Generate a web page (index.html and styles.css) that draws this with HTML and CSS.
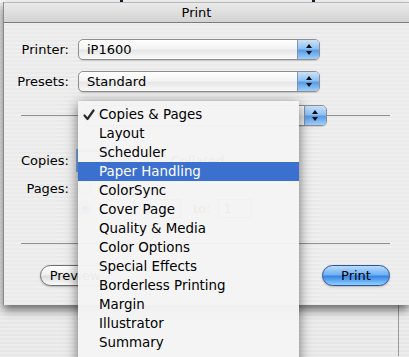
FILE: index.html
```html
<!DOCTYPE html>
<html>
<head>
<meta charset="utf-8">
<link rel="stylesheet" href="styles.css">
</head>
<body>
<div class="page">
  <div class="topstrip"><span class="mark m1"></span><span class="mark m2"></span></div>
  <div class="sheet">
    <div class="titlebar">Print</div>
    <div class="content">
      <div class="row r-printer">
        <div class="label">Printer:</div>
        <div class="popup"><span class="ptext">iP1600</span><span class="stepper"><i class="up"></i><i class="down"></i></span></div>
      </div>
      <div class="row r-presets">
        <div class="label">Presets:</div>
        <div class="popup"><span class="ptext">Standard</span><span class="stepper"><i class="up"></i><i class="down"></i></span></div>
      </div>
      <div class="seprow">
        <div class="line"></div>
        <div class="popup"><span class="ptext"></span><span class="stepper"><i class="up"></i><i class="down"></i></span></div>
        <div class="line"></div>
      </div>
      <div class="row r-copies">
        <div class="label">Copies:</div>
        <div class="field focus"></div>
        <div class="check-box"></div><span class="ctext">Collated</span>
      </div>
      <div class="row r-pages">
        <div class="label">Pages:</div>
        <div class="radio"></div>
      </div>
      <div class="row r-from">
        <div class="label"></div>
        <div class="radio on"></div>
        <div class="field wide"></div>
        <span class="ctext to">to:</span>
        <div class="field wide">1</div>
      </div>
      <div class="sep2"></div>
      <div class="buttons">
        <div class="btn preview">Preview</div>
        <div class="btn print">Print</div>
      </div>
    </div>
  </div>
  <div class="below"><div class="behind"></div></div>

  <div class="menu">
    <div class="item"><span class="chk"><svg width="12" height="12" viewBox="0 0 12 12"><path d="M1.5 6.5 L4.5 10 L10.5 1.5" fill="none" stroke="#2a2a2a" stroke-width="2.2" stroke-linecap="round" stroke-linejoin="round"/></svg></span>Copies &amp; Pages</div>
    <div class="item"><span class="chk"></span>Layout</div>
    <div class="item"><span class="chk"></span>Scheduler</div>
    <div class="item sel"><span class="chk"></span>Paper Handling</div>
    <div class="item"><span class="chk"></span>ColorSync</div>
    <div class="item"><span class="chk"></span>Cover Page</div>
    <div class="item"><span class="chk"></span>Quality &amp; Media</div>
    <div class="item"><span class="chk"></span>Color Options</div>
    <div class="item"><span class="chk"></span>Special Effects</div>
    <div class="item"><span class="chk"></span>Borderless Printing</div>
    <div class="item"><span class="chk"></span>Margin</div>
    <div class="item"><span class="chk"></span>Illustrator</div>
    <div class="item"><span class="chk"></span>Summary</div>
  </div>
</div>
</body>
</html>
```

FILE: styles.css
```css
html, body {
  margin: 0;
  padding: 0;
}
body {
  font-family: "DejaVu Sans", "Liberation Sans", sans-serif;
  font-size: 13px;
  color: #000;
}
.page {
  position: relative;
  width: 409px;
  height: 357px;
  overflow: hidden;
  background: repeating-linear-gradient(to bottom, #ededed 0 2px, #e7e7e7 2px 4px);
}
.topstrip {
  height: 3px;
  background: #f6f6f6;
  display: flex;
}
.mark {
  display: block;
  width: 3px;
  height: 2px;
  background: #1c1c3a;
}
.m1 { margin-left: 120px; }
.m2 { margin-left: 189px; }

.sheet {
  margin-left: 3px;
  height: 303px;
  border-left: 1px solid #8c8c8c;
  box-sizing: border-box;
  background: repeating-linear-gradient(to bottom, #efefef 0 2px, #eaeaea 2px 4px);
  box-shadow: 0 5px 9px rgba(0, 0, 0, 0.55);
  position: relative;
  z-index: 1;
}
.titlebar {
  height: 19px;
  line-height: 19px;
  border-bottom: 1px solid #7b7b7b;
  border-top: 1px solid #b9b9b9;
  margin-top: -1px;
  background: linear-gradient(to bottom, #eaeaea, #d3d3d3);
  text-align: center;
  font-size: 13px;
  padding-right: 20px;
}
.content {
  padding: 16px 19px 0 0;
}
.row {
  display: flex;
  align-items: center;
  height: 21px;
}
.label {
  width: 65px;
  text-align: right;
  margin-right: 9px;
  flex: none;
}
.r-presets { margin-top: 11px; }

.popup {
  position: relative;
  width: 242px;
  height: 21px;
  box-sizing: border-box;
  border: 1px solid #8e8e8e;
  border-radius: 5px;
  background: linear-gradient(to bottom, #ffffff 0%, #f4f4f4 45%, #e6e6e6 55%, #fbfbfb 100%);
  display: flex;
  align-items: center;
  box-shadow: 0 1px 1px rgba(0,0,0,0.15);
  flex: none;
}
.ptext {
  padding-left: 8px;
  flex: 1;
  line-height: 19px;
}
.stepper {
  width: 21px;
  height: 19px;
  border-left: 1px solid #7d95b8;
  border-radius: 0 4px 4px 0;
  background: linear-gradient(to bottom, #c9e2fb 0%, #91c1f2 45%, #5a9be6 55%, #9fd0fb 100%);
  display: flex;
  flex-direction: column;
  align-items: center;
  justify-content: center;
  gap: 3px;
}
.stepper i {
  display: block;
  width: 0;
  height: 0;
  border-left: 3px solid transparent;
  border-right: 3px solid transparent;
}
.stepper .up { border-bottom: 4px solid #111; }
.stepper .down { border-top: 4px solid #111; }

.seprow {
  display: flex;
  align-items: center;
  margin-top: 13px;
  padding-left: 17px;
}
.seprow .line {
  flex: 1;
  height: 1px;
  background: #8f8f8f;
}

.r-copies { margin-top: 24px; }
.r-pages { margin-top: 7px; height: 20px; }
.r-from { height: 20px; }

.field {
  width: 32px;
  height: 19px;
  box-sizing: border-box;
  border: 1px solid #8a8a8a;
  background: #fff;
  padding-left: 4px;
  line-height: 17px;
  flex: none;
}
.field.focus {
  box-shadow: 0 0 0 2px #7fadea;
}
.field.wide { width: 34px; }
.check-box {
  width: 12px;
  height: 12px;
  border: 1px solid #8a8a8a;
  border-radius: 2px;
  background: linear-gradient(#fff, #ddd);
  margin-left: 42px;
  margin-right: 5px;
}
.radio {
  width: 12px;
  height: 12px;
  border: 1px solid #8a8a8a;
  border-radius: 50%;
  background: linear-gradient(#fff, #ddd);
  margin-right: 5px;
}
.radio.on {
  background: radial-gradient(circle, #222 0 2px, transparent 3px), linear-gradient(#aad0f8, #4f93e6);
}
.r-from .field { margin-left: 50px; }
.r-from .to + .field { margin-left: 8px; }
.to { margin-left: 12px; }

.sep2 {
  margin: 25px 0 0 17px;
  height: 1px;
  background: #8f8f8f;
}
.buttons {
  margin-top: 21px;
  display: flex;
  padding-left: 36px;
}
.btn {
  height: 21px;
  line-height: 19px;
  box-sizing: border-box;
  border: 1px solid #6f6f6f;
  border-radius: 11px;
  text-align: center;
  background: linear-gradient(to bottom, #ffffff 0%, #f0f0f0 45%, #dcdcdc 55%, #fafafa 100%);
  box-shadow: 0 1px 2px rgba(0,0,0,0.25);
  flex: none;
}
.preview { width: 70px; }
.print {
  width: 68px;
  margin-left: 212px;
  border-color: #2f5597;
  background: linear-gradient(to bottom, #b9dcfd 0%, #6fb1f3 45%, #3a86e4 55%, #8fd0ff 100%);
}

.below {
  height: 51px;
}
.behind {
  width: 398px;
  height: 51px;
  border-right: 1px solid #9a9a9a;
}

.menu {
  position: absolute;
  left: 78px;
  top: 101px;
  width: 221px;
  height: 270px;
  padding-top: 4px;
  box-sizing: border-box;
  background: rgba(244, 244, 244, 0.965);
  box-shadow: 0 3px 12px rgba(0, 0, 0, 0.55);
  z-index: 5;
  font-size: 13.4px;
}
.item {
  height: 19px;
  line-height: 19px;
  display: flex;
  align-items: center;
  white-space: nowrap;
}
.item.sel {
  background: #3b70cf;
  color: #fff;
}
.chk {
  width: 21px;
  height: 19px;
  flex: none;
  display: flex;
  align-items: center;
  padding-left: 5px;
  box-sizing: border-box;
}
```
